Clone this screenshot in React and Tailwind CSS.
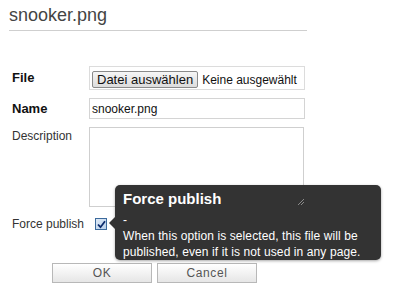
import React from "react";

// ── Feld-Zeile mit fester Label-Spalte ──────────────────────────────────────
const Row = ({ label, bold, align = "items-center", className = "", children }) => (
  <div className={`flex ${align} ${className}`}>
    <div className={`w-[77px] shrink-0 text-[12px] ${bold ? "font-bold text-[13px] text-[#111]" : "text-[#333]"}`}>
      {label}
    </div>
    {children}
  </div>
);

const Checkbox = () => (
  <span className="ml-[6px] flex h-[12px] w-[12px] items-center justify-center border border-[#3c6a9c] bg-gradient-to-br from-[#dfeaf7] to-[#b9d0ea]">
    <svg width="9" height="9" viewBox="0 0 9 9">
      <path d="M1 4.5 L3.5 7.2 L8 1.2" fill="none" stroke="#0b2a6b" strokeWidth="1.8" />
    </svg>
  </span>
);

const Btn = ({ children }) => (
  <button className="h-[20px] w-[100px] border border-[#b8b8b8] bg-gradient-to-b from-[#ffffff] to-[#e6e6e6] text-[12px] tracking-[0.6px] text-[#555]">
    {children}
  </button>
);

export default function App() {
  return (
    <div className="relative h-[301px] w-[402px] overflow-hidden bg-white font-['Liberation_Sans',Arial,sans-serif]">
      {/* Titel */}
      <div className="mx-[9px] w-[298px] border-b border-[#cfcfcf] pt-[5px] pb-[4px] text-[18px] leading-[21px] text-[#444]">
        snooker.png
      </div>

      <div className="pl-[12px]">
        {/* Datei */}
        <Row label="File" bold className="mt-[35px]">
          <div className="flex h-[24px] w-[216px] items-center overflow-hidden border border-[#dcdcdc] pl-[2px] pt-[3px] whitespace-nowrap">
            <span className="flex h-[17px] items-center rounded-[2px] border border-[#8a8a8a] bg-gradient-to-b from-[#f6f6f6] to-[#dcdcdc] px-[4px] text-[13px] text-[#111]">
              Datei auswählen
            </span>
            <span className="ml-[4px] text-[12px] text-[#111]">Keine ausgewählt</span>
          </div>
        </Row>

        {/* Name */}
        <Row label="Name" bold className="mt-[8px]">
          <div className="flex h-[21px] w-[216px] items-center border border-[#d4d4d4] pl-[2px] text-[12px] text-[#111]">
            snooker.png
          </div>
        </Row>

        {/* Beschreibung */}
        <Row label="Description" align="items-start" className="mt-[8px]">
          <div className="h-[80px] w-[215px] border border-[#cfcfcf]" />
        </Row>

        {/* Force publish */}
        <div className="mt-[10px] flex h-[14px] items-center">
          <div className="w-[77px] shrink-0 text-[12px] text-[#333]">Force publish</div>
          <Checkbox />
        </div>

        {/* Buttons */}
        <div className="mt-[32px] ml-[40px] flex gap-[5px]">
          <Btn>OK</Btn>
          <Btn>Cancel</Btn>
        </div>
      </div>

      {/* Tooltip */}
      <div className="absolute left-[115px] top-[185px] h-[75px] w-[266px] rounded-[5px] bg-[#333333] px-[8px] pt-[4px] text-white shadow-[0_1px_3px_rgba(0,0,0,0.35)]">
        <span className="absolute left-[-6px] top-[32px] h-0 w-0 border-y-[6px] border-r-[6px] border-y-transparent border-r-[#333333]" />
        <div className="text-[15px] font-bold leading-[20px]">Force publish</div>
        <div className="mt-[3px] text-[12px] leading-[16px] tracking-[0.1px]">
          <div>-</div>
          <div>When this option is selected, this file will be</div>
          <div>published, even if it is not used in any page.</div>
        </div>
        {/* Resize-Griff der Textarea schimmert durch */}
        <svg className="absolute left-[182px] top-[13px]" width="8" height="8" viewBox="0 0 8 8">
          <path d="M7 1 L1 7 M7 4 L4 7" stroke="#8a8a8a" strokeWidth="1" />
        </svg>
      </div>
    </div>
  );
}
